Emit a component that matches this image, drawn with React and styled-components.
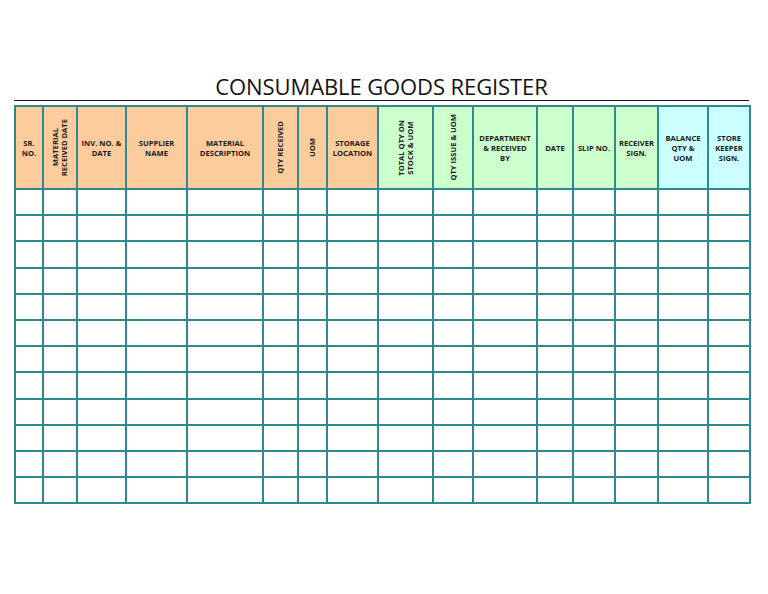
import styled, { createGlobalStyle } from "styled-components";

const GlobalStyle = createGlobalStyle`
  html, body {
    margin: 0;
    padding: 0;
    background: #ffffff;
  }
  body {
    font-family: "Open Sans", "Liberation Sans", sans-serif;
  }
`;

const PEACH = "#fccc9d";
const MINT = "#ccffcc";
const ICE = "#ccffff";

const columns = [
  { width: 28, bg: PEACH, label: ["SR.", "NO."] },
  { width: 34, bg: PEACH, label: ["MATERIAL", "RECEIVED DATE"], vertical: true },
  { width: 49, bg: PEACH, label: ["INV. NO. &", "DATE"] },
  { width: 61, bg: PEACH, label: ["SUPPLIER", "NAME"] },
  { width: 76, bg: PEACH, label: ["MATERIAL", "DESCRIPTION"] },
  { width: 35, bg: PEACH, label: ["QTY RECEIVED"], vertical: true },
  { width: 29, bg: PEACH, label: ["UOM"], vertical: true },
  { width: 51, bg: PEACH, label: ["STORAGE", "LOCATION"] },
  { width: 55, bg: MINT, label: ["TOTAL QTY ON", "STOCK & UOM"], vertical: true },
  { width: 40, bg: MINT, label: ["QTY ISSUE & UOM"], vertical: true },
  { width: 64, bg: MINT, label: ["DEPARTMENT", "& RECEIVED", "BY"] },
  { width: 36, bg: MINT, label: ["DATE"] },
  { width: 42, bg: MINT, label: ["SLIP NO."] },
  { width: 43, bg: MINT, label: ["RECEIVER", "SIGN."] },
  { width: 50, bg: ICE, label: ["BALANCE", "QTY &", "UOM"] },
  { width: 42, bg: ICE, label: ["STORE", "KEEPER", "SIGN."] },
];

const ROWS = 12;

const App = () => {
  return (
    <>
      <GlobalStyle />
      <Page>
        <TitleWrap>
          <Title>CONSUMABLE GOODS REGISTER</Title>
        </TitleWrap>
        <Register>
          <colgroup>
            {columns.map((c, i) => (
              <col key={i} style={{ width: c.width }} />
            ))}
          </colgroup>
          <thead>
            <tr>
              {columns.map((c, i) => (
                <HeadCell key={i} $bg={c.bg}>
                  {c.vertical ? (
                    <Vertical>
                      {c.label.map((l, j) => (
                        <span key={j}>{l}</span>
                      ))}
                    </Vertical>
                  ) : (
                    <Horizontal>
                      {c.label.map((l, j) => (
                        <span key={j}>{l}</span>
                      ))}
                    </Horizontal>
                  )}
                </HeadCell>
              ))}
            </tr>
          </thead>
          <tbody>
            {Array.from({ length: ROWS }).map((_, r) => (
              <tr key={r}>
                {columns.map((c, i) => (
                  <BodyCell key={i} />
                ))}
              </tr>
            ))}
          </tbody>
        </Register>
      </Page>
    </>
  );
};
export default App;

const Page = styled.div`
  width: 768px;
  height: 594px;
  padding: 0 18px 0 14px;
  box-sizing: border-box;
`;
const TitleWrap = styled.div`
  width: 735px;
  height: 100px;
  border-bottom: 1px solid #1a1a1a;
  display: flex;
  align-items: flex-end;
  justify-content: center;
  margin-bottom: 4px;
`;
const Title = styled.h1`
  margin: 0;
  font-family: "Open Sans", "Liberation Sans", sans-serif;
  font-weight: 400;
  font-size: 22px;
  letter-spacing: -0.1px;
  color: #111;
  line-height: 28px;
`;
const Register = styled.table`
  border-collapse: collapse;
  table-layout: fixed;
  width: 735px;
  border: 2px solid #2f8a8f;
`;
const HeadCell = styled.th`
  background: ${(p) => p.$bg};
  border: 2px solid #2f8a8f;
  height: 81px;
  padding: 0;
  vertical-align: middle;
  text-align: center;
`;
const Horizontal = styled.div`
  display: flex;
  flex-direction: column;
  align-items: center;
  font-size: 7.6px;
  font-weight: 700;
  line-height: 10px;
  color: #1a1a1a;
  white-space: nowrap;
`;
const Vertical = styled.div`
  writing-mode: vertical-rl;
  transform: rotate(180deg);
  display: flex;
  flex-direction: column;
  align-items: center;
  justify-content: center;
  margin: 0 auto;
  font-size: 7.6px;
  font-weight: 700;
  line-height: 9px;
  color: #1a1a1a;
  white-space: nowrap;
`;
const BodyCell = styled.td`
  border: 2px solid #2f8a8f;
  height: 24.2px;
  padding: 0;
`;
